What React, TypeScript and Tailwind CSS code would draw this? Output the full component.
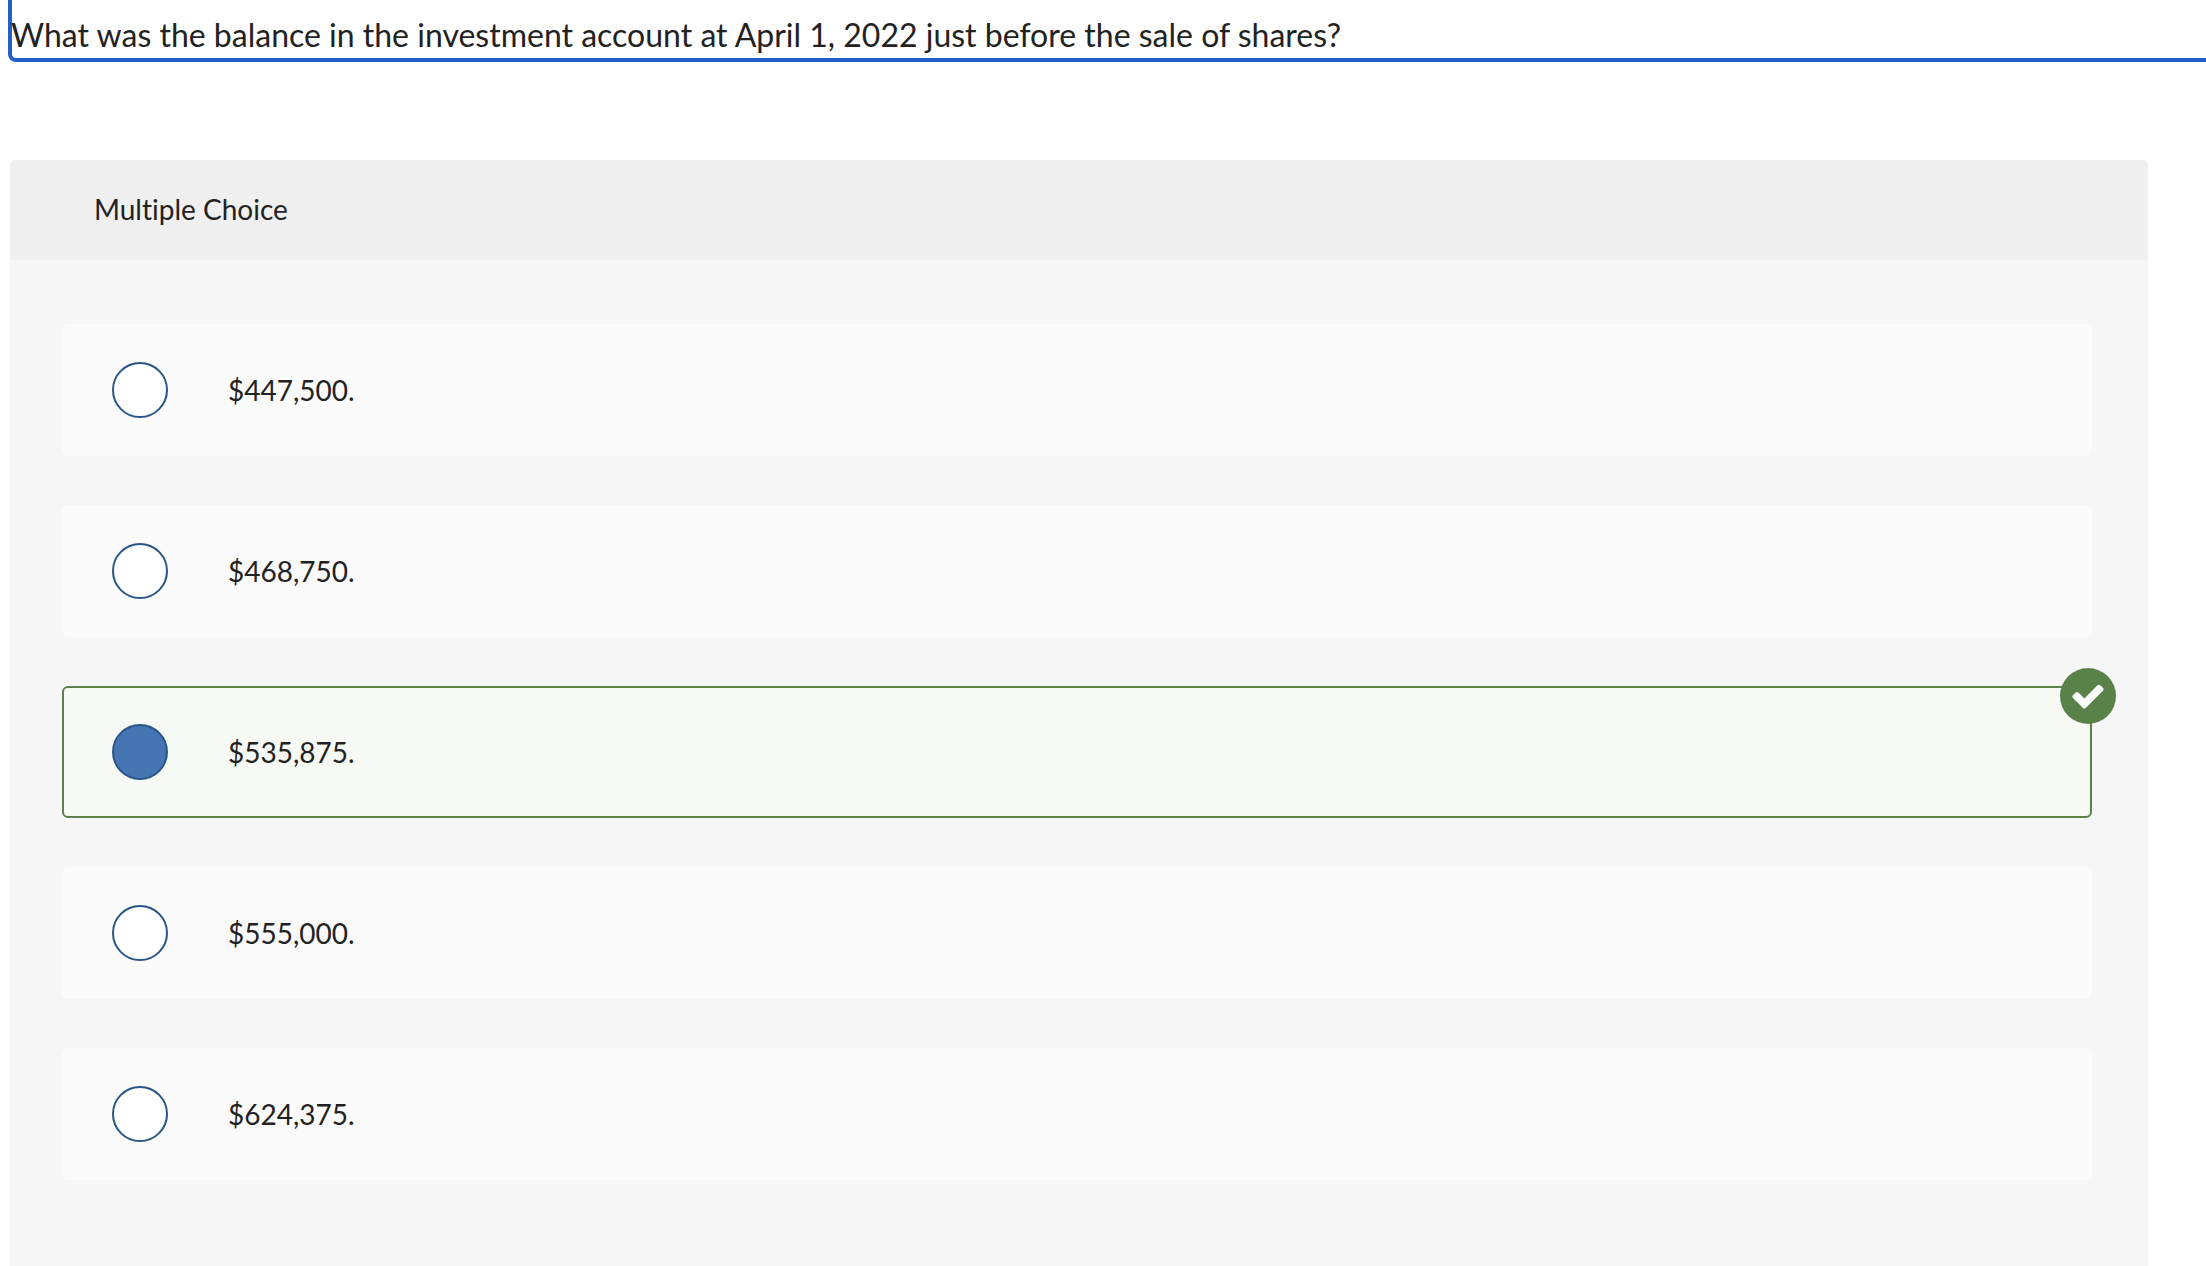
import { useState } from 'react';

const OPTIONS = ['$447,500.', '$468,750.', '$535,875.', '$555,000.', '$624,375.'];
const CORRECT = '$535,875.';

function CorrectBadge() {
  return (
    <span className="absolute -top-5 -right-[26px] flex size-14 items-center justify-center rounded-full bg-[#588248]">
      <svg viewBox="0 0 1792 1792" className="size-9" fill="#fff" role="img" aria-label="Correct">
        <path d="M1671 566q0 40-28 68l-724 724-136 136q-28 28-68 28t-68-28l-136-136-362-362q-28-28-28-68t28-68l136-136q28-28 68-28t68 28l294 295 656-657q28-28 68-28t68 28l136 136q28 28 28 68z" />
      </svg>
    </span>
  );
}

export default function App() {
  const [selected, setSelected] = useState(CORRECT);

  return (
    <main className="flex min-h-screen flex-col overflow-hidden bg-white font-['Lato',sans-serif] text-[#222] [font-variant-ligatures:none]">
      {/* Question, focus ring runs off the right edge */}
      <div className="ml-2 rounded-bl-lg border-b-4 border-l-4 border-[#225fc8] pt-[18px] pb-1.5">
        <h1 className="-ml-px text-[32px] leading-[34px]">
          What was the balance in the investment account at April 1, 2022 just before the sale of shares?
        </h1>
      </div>

      <section
        role="radiogroup"
        aria-labelledby="answers-title"
        className="mt-[98px] mr-[58px] ml-[10px] grow rounded-t-md bg-[#f6f6f6]"
      >
        <h2 id="answers-title" className="rounded-t-md bg-[#f0f0f0] px-[84px] pt-[31px] pb-[33px] text-[28px] leading-9">
          Multiple Choice
        </h2>

        <div className="flex flex-col gap-[49px] py-16 pr-14 pl-[52px]">
          {OPTIONS.map(option => {
            const correct = option === CORRECT && selected === option;
            return (
              <label
                key={option}
                className={`relative flex h-[132px] cursor-pointer items-center gap-[60px] rounded-md border-2 px-12 text-[28px] leading-9 ${
                  correct ? 'border-[#588248] bg-[#f7f9f5]' : 'border-[#fbfbfb] bg-[#fbfbfb]'
                }`}
              >
                <input
                  type="radio"
                  name="answer"
                  value={option}
                  checked={selected === option}
                  onChange={() => setSelected(option)}
                  className="size-14 shrink-0 appearance-none rounded-full border-2 border-[#285689] bg-white checked:bg-[#4675b4]"
                />
                <span>{option}</span>
                {correct && <CorrectBadge />}
              </label>
            );
          })}
        </div>
      </section>
    </main>
  );
}
